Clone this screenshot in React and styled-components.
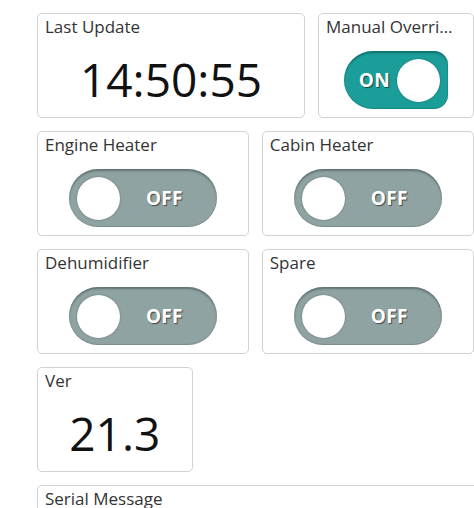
import styled, { createGlobalStyle } from "styled-components";

const UNIT = 43.2;
const GAP = 13;
const spanWidth = (n) => n * UNIT + (n - 1) * GAP;

const GlobalStyle = createGlobalStyle`
  html, body {
    margin: 0;
    padding: 0;
    background: #ffffff;
    overflow: hidden;
  }
  body {
    font-family: "Open Sans", "Noto Sans", sans-serif;
  }
`;

const Dashboard = () => {
  return (
    <Page>
      <GlobalStyle />
      <Row>
        <Card $span={5}>
          <Title>Last Update</Title>
          <Body>
            <BigValue>14:50:55</BigValue>
          </Body>
        </Card>
        <Card $span={3}>
          <Title $narrow>Manual Override</Title>
          <Body>
            <Switch on short />
          </Body>
        </Card>
      </Row>
      <Row>
        <Card $span={4}>
          <Title>Engine Heater</Title>
          <Body>
            <Switch />
          </Body>
        </Card>
        <Card $span={4}>
          <Title>Cabin Heater</Title>
          <Body>
            <Switch />
          </Body>
        </Card>
      </Row>
      <Row>
        <Card $span={4}>
          <Title>Dehumidifier</Title>
          <Body>
            <Switch />
          </Body>
        </Card>
        <Card $span={4}>
          <Title>Spare</Title>
          <Body>
            <Switch />
          </Body>
        </Card>
      </Row>
      <Row>
        <Card $span={3}>
          <Title>Ver</Title>
          <Body>
            <BigValue>21.3</BigValue>
          </Body>
        </Card>
      </Row>
      <Row>
        <Card $span={12}>
          <Title>Serial Message</Title>
          <Body />
        </Card>
      </Row>
    </Page>
  );
};

const Switch = ({ on, short }) => {
  return (
    <Track $on={on} $short={short}>
      {on && <SwitchLabel>ON</SwitchLabel>}
      <Knob />
      {!on && <SwitchLabel>OFF</SwitchLabel>}
    </Track>
  );
};

const Page = styled.div`
  display: flex;
  flex-direction: column;
  gap: ${GAP}px;
  padding: 13px 0 0 37px;
  width: 1000px;
`;

const Row = styled.div`
  display: flex;
  gap: ${GAP}px;
`;

const Card = styled.div`
  box-sizing: border-box;
  width: ${({ $span }) => spanWidth($span)}px;
  height: 105px;
  border: 1px solid #d2d2d2;
  border-radius: 5px;
  background: #fff;
  display: flex;
  flex-direction: column;
  padding: 1px 7px 0 7px;
  overflow: hidden;
`;

const Title = styled.div`
  font-size: 17px;
  line-height: 23px;
  color: #333;
  white-space: nowrap;
  overflow: hidden;
  text-overflow: ellipsis;
  padding-right: ${({ $narrow }) => ($narrow ? "10px" : "0")};
`;

const Body = styled.div`
  flex: 1;
  display: flex;
  align-items: center;
  justify-content: center;
  padding-top: 5px;
`;

const BigValue = styled.div`
  font-size: 46px;
  color: #111;
  line-height: 1.3;
`;

const Track = styled.div`
  box-sizing: border-box;
  flex: none;
  width: ${({ $short }) => ($short ? 104 : 148)}px;
  height: 58px;
  border-radius: ${({ $short }) => ($short ? "29px 14px 14px 29px" : "29px")};
  background: ${({ $on }) => ($on ? "#1b9e9a" : "#8fa3a2")};
  box-shadow: inset 0 2px 2px
      ${({ $on }) => ($on ? "rgba(0, 60, 58, 0.45)" : "rgba(40, 60, 60, 0.45)")},
    inset 0 -1px 1px rgba(0, 0, 0, 0.15);
  display: flex;
  align-items: center;
  padding: 0 8px;
`;

const Knob = styled.div`
  flex: none;
  width: 43px;
  height: 43px;
  border-radius: 50%;
  background: #fff;
  box-shadow: 0 0 2px rgba(0, 0, 0, 0.35);
`;

const SwitchLabel = styled.span`
  flex: 1;
  text-align: center;
  font-family: "Open Sans", "Noto Sans", sans-serif;
  font-weight: 700;
  font-size: 19px;
  color: #fff;
  text-shadow: 1px 1px 1px rgba(0, 0, 0, 0.55);
  letter-spacing: 0.3px;
`;

export default Dashboard;
